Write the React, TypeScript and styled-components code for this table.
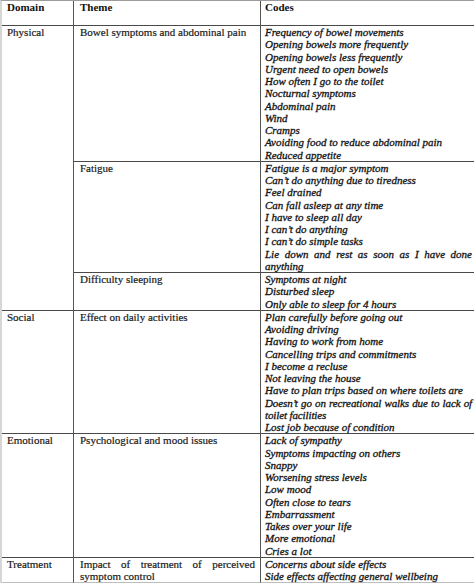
import styled, { createGlobalStyle } from "styled-components";

const GlobalStyle = createGlobalStyle`
  html, body {
    margin: 0;
    padding: 0;
    background: #ffffff;
  }
  body {
    width: 474px;
    height: 583px;
    overflow: hidden;
  }
`;

interface ThemeRow {
  theme: string;
  codes: string[];
}

interface DomainGroup {
  domain: string;
  themes: ThemeRow[];
}

// codes that sit a little tighter in the source so they hold one more word per line
const tightCodes = ["Doesn’t go on recreational walks due to lack of toilet facilities"];

const groups: DomainGroup[] = [
  {
    domain: "Physical",
    themes: [
      {
        theme: "Bowel symptoms and abdominal pain",
        codes: [
          "Frequency of bowel movements",
          "Opening bowels more frequently",
          "Opening bowels less frequently",
          "Urgent need to open bowels",
          "How often I go to the toilet",
          "Nocturnal symptoms",
          "Abdominal pain",
          "Wind",
          "Cramps",
          "Avoiding food to reduce abdominal pain",
          "Reduced appetite",
        ],
      },
      {
        theme: "Fatigue",
        codes: [
          "Fatigue is a major symptom",
          "Can’t do anything due to tiredness",
          "Feel drained",
          "Can fall asleep at any time",
          "I have to sleep all day",
          "I can’t do anything",
          "I can’t do simple tasks",
          "Lie down and rest as soon as I have done anything",
        ],
      },
      {
        theme: "Difficulty sleeping",
        codes: [
          "Symptoms at night",
          "Disturbed sleep",
          "Only able to sleep for 4 hours",
        ],
      },
    ],
  },
  {
    domain: "Social",
    themes: [
      {
        theme: "Effect on daily activities",
        codes: [
          "Plan carefully before going out",
          "Avoiding driving",
          "Having to work from home",
          "Cancelling trips and commitments",
          "I become a recluse",
          "Not leaving the house",
          "Have to plan trips based on where toilets are",
          "Doesn’t go on recreational walks due to lack of toilet facilities",
          "Lost job because of condition",
        ],
      },
    ],
  },
  {
    domain: "Emotional",
    themes: [
      {
        theme: "Psychological and mood issues",
        codes: [
          "Lack of sympathy",
          "Symptoms impacting on others",
          "Snappy",
          "Worsening stress levels",
          "Low mood",
          "Often close to tears",
          "Embarrassment",
          "Takes over your life",
          "More emotional",
          "Cries a lot",
        ],
      },
    ],
  },
  {
    domain: "Treatment",
    themes: [
      {
        theme: "Impact of treatment of perceived symptom control",
        codes: [
          "Concerns about side effects",
          "Side effects affecting general wellbeing",
        ],
      },
    ],
  },
];

const Page = styled.div`
  width: 474px;
  height: 583px;
  overflow: hidden;
  background: #dedede;
`;

const Table = styled.table`
  width: 480px;
  table-layout: fixed;
  border-collapse: separate;
  border-spacing: 0;
  background: #ffffff;
  border-top: 1px solid #9c9c9c;
  border-left: 2px solid #d6d6d6;
  font-family: "Liberation Serif", "Times New Roman", serif;
  font-size: 11px;
  line-height: 12.25px;
  color: #1a1a1a;
  -webkit-text-stroke: 0.2px #1a1a1a;
`;

const Cell = styled.td<{ $col: "domain" | "theme" | "codes"; $last?: boolean }>`
  vertical-align: top;
  text-align: justify;
  padding: 0 ${({ $col }) => ($col === "codes" ? "8px" : "5px")} 0
    ${({ $col }) => ($col === "domain" ? "5px" : $col === "theme" ? "6px" : "4px")};
  border-bottom: 1px solid ${({ $last }) => ($last ? "#bdbdbd" : "#4a4a4a")};
  border-right: ${({ $col }) => ($col === "codes" ? "none" : "1px solid #555555")};
`;

const HeadCell = styled(Cell).attrs({ as: "th" })`
  font-weight: bold;
  text-align: left;
  height: 24px;
  color: #111111;
  -webkit-text-stroke: 0;
`;

const Code = styled.div<{ $tight?: boolean }>`
  font-style: italic;
  color: #111111;
  -webkit-text-stroke: 0.3px #111111;
  letter-spacing: ${({ $tight }) => ($tight ? "-0.12px" : "0")};
`;

export default function App() {
  return (
    <Page>
      <GlobalStyle />
      <Table>
        <colgroup>
          <col style={{ width: 72 }} />
          <col style={{ width: 187 }} />
          <col />
        </colgroup>
        <thead>
          <tr>
            <HeadCell $col="domain">Domain</HeadCell>
            <HeadCell $col="theme">Theme</HeadCell>
            <HeadCell $col="codes">Codes</HeadCell>
          </tr>
        </thead>
        <tbody>
          {groups.map((g, gi) =>
            g.themes.map((t, i) => {
              const last = gi === groups.length - 1 && i === g.themes.length - 1;
              return (
                <tr key={g.domain + t.theme}>
                  {i === 0 && (
                    <Cell $col="domain" $last={gi === groups.length - 1} rowSpan={g.themes.length}>
                      {g.domain}
                    </Cell>
                  )}
                  <Cell $col="theme" $last={last}>
                    {t.theme}
                  </Cell>
                  <Cell $col="codes" $last={last}>
                    {t.codes.map((c) => (
                      <Code key={c} $tight={tightCodes.includes(c)}>
                        {c}
                      </Code>
                    ))}
                  </Cell>
                </tr>
              );
            })
          )}
        </tbody>
      </Table>
    </Page>
  );
}
